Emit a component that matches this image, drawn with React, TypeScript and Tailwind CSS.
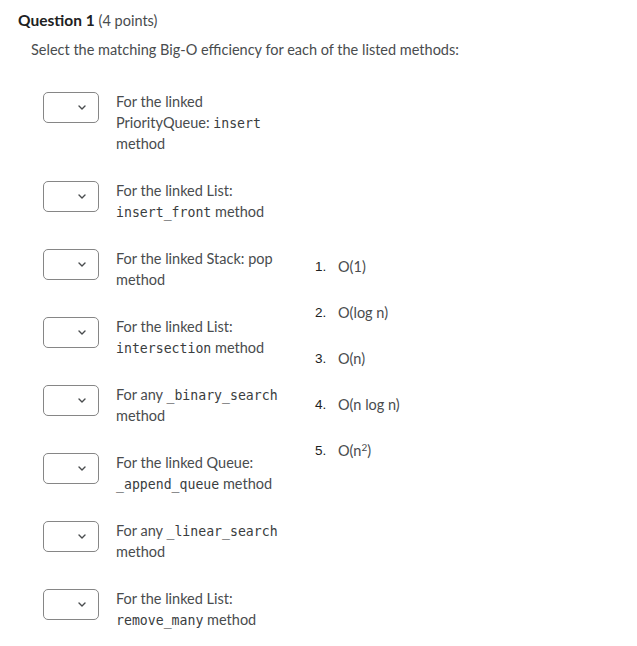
import React from "react";

const Mono = ({ children }: { children: React.ReactNode }) => (
  <span className="font-['DejaVu_Sans_Mono',monospace] text-[13.2px] leading-none text-[#3a3d40]">{children}</span>
);

const rows: React.ReactNode[] = [
  <>For the linked PriorityQueue: <Mono>insert</Mono> method</>,
  <>For the linked List: <Mono>insert_front</Mono> method</>,
  <>For the linked Stack: pop method</>,
  <>For the linked List: <Mono>intersection</Mono> method</>,
  <>For any <Mono>_binary_search</Mono> method</>,
  <>For the linked Queue: <Mono>_append_queue</Mono> method</>,
  <>For any <Mono>_linear_search</Mono> method</>,
  <>For the linked List: <Mono>remove_many</Mono> method</>,
];

const items: React.ReactNode[] = [
  <>O(1)</>,
  <>O(log n)</>,
  <>O(n)</>,
  <>O(n log n)</>,
  <>O(n<sup className="text-[10px] leading-none">2</sup>)</>,
];

export default function App() {
  return (
    <div className="min-h-[646px] w-[637px] bg-white font-['Lato',sans-serif] text-[14.5px] text-[#494c4e] pl-[18px] pt-[10px]">
      <h2 className="text-[15.5px] leading-[21px] text-[#202122]">
        <span className="font-bold">Question 1</span>{" "}
        <span className="text-[#494c4e] text-[14.5px]">(4 points)</span>
      </h2>
      <p className="ml-[13px] mt-[9px] leading-[20px]">
        Select the matching Big-O efficiency for each of the listed methods:
      </p>
      <div className="flex mt-[31px] ml-[25px]">
        <div className="flex flex-col gap-[26px]">
          {rows.map((r, i) => (
            <div key={i} className="flex items-start">
              <div className="mt-[1px] w-[56px] h-[31px] rounded-[5px] border border-[#868686] flex items-center justify-end pr-[12px] shrink-0">
                <svg width="8" height="5" viewBox="0 0 8 5" fill="none">
                  <path d="M1 1l3 3 3-3" stroke="#494c4e" strokeWidth="1.4" strokeLinecap="round" strokeLinejoin="round" />
                </svg>
              </div>
              <div className="ml-[17px] w-[172px] leading-[21px]">{r}</div>
            </div>
          ))}
        </div>
        <ol className="self-center ml-[27px] flex flex-col gap-[25px] mt-[-4px]">
          {items.map((o, i) => (
            <li key={i} className="flex items-start leading-[21px]">
              <span className="w-[23px] text-[#202122] font-['Liberation_Sans',sans-serif] text-[13.5px]">{i + 1}.</span>
              <span>{o}</span>
            </li>
          ))}
        </ol>
      </div>
    </div>
  );
}
